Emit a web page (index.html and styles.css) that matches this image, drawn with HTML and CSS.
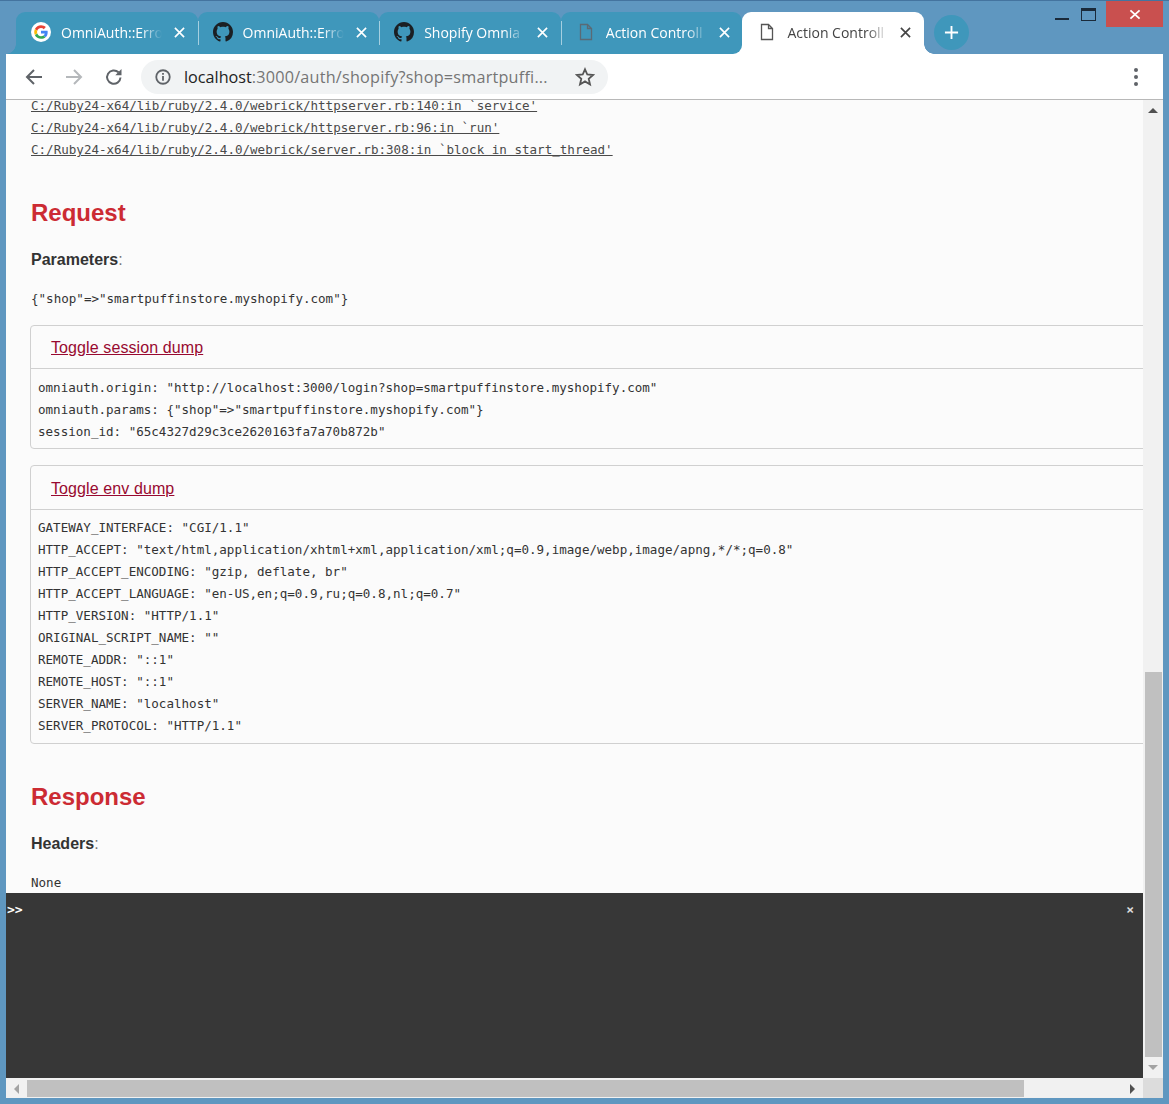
FILE: index.html
```html
<!DOCTYPE html>
<html lang="en">
<head>
    <meta charset="UTF-8">
    <title>Action Controller: Exception caught</title>
    <link rel="stylesheet" href="styles.css">
</head>
<body>

    <!-- Tab strip -->
    <div class="tabstrip">
        <div class="tabs">
            <div class="tab first">
                <svg class="favicon" viewBox="0 0 48 48">
                    <circle cx="24" cy="24" r="24" fill="#fff"/>
                    <path fill="#ea4335" d="M24 14.5c2.600 0 4.900.900 6.700 2.600l4.900-4.900C32.600 9.400 28.700 7.700 24 7.700c-6.400 0-11.900 3.700-14.600 9l5.700 4.400c1.300-4 5-6.600 8.900-6.600z"/>
                    <path fill="#4285f4" d="M40 24.400c0-1.200-.100-2.300-.300-3.300H24v6.300h9c-.400 2.100-1.600 3.800-3.300 5l5.500 4.300c3.200-3 4.800-7.300 4.800-12.300z"/>
                    <path fill="#fbbc05" d="M15.100 26.900c-.300-1-.500-2-.500-3s.200-2 .500-2.900l-5.700-4.400C8.300 18.800 7.700 21.300 7.700 24s.600 5.200 1.700 7.400l5.700-4.500z"/>
                    <path fill="#34a853" d="M24 40.300c4.400 0 8.100-1.500 10.800-3.900l-5.100-4c-1.500 1-3.400 1.600-5.700 1.600-4 0-7.600-2.700-8.900-6.500l-5.700 4.400c2.700 5.300 8.200 8.400 14.600 8.400z"/>
                </svg>
                <span class="title">OmniAuth::Erro</span>
                <svg class="close" viewBox="0 0 12 12"><path d="M1 1l10 10M11 1L1 11"/></svg>
            </div>
            <div class="tab sep">
                <svg class="favicon" viewBox="0 0 16 16"><path class="octo" d="M8 0C3.580 0 0 3.580 0 8c0 3.540 2.290 6.530 5.470 7.590.4.070.55-.17.55-.38 0-.19-.01-.82-.01-1.490-2.010.37-2.530-.49-2.690-.94-.09-.23-.48-.94-.82-1.130-.28-.15-.68-.52-.01-.53.63-.01 1.080.58 1.230.82.72 1.210 1.870.87 2.330.66.070-.52.280-.87.510-1.070-1.780-.2-3.640-.89-3.640-3.950 0-.87.310-1.590.820-2.150-.08-.2-.36-1.020.08-2.120 0 0 .67-.21 2.200.82.640-.18 1.320-.27 2-.27s1.360.09 2 .27c1.530-1.040 2.200-.82 2.200-.82.440 1.100.160 1.920.080 2.120.510.560.820 1.270.820 2.150 0 3.070-1.870 3.750-3.650 3.950.290.250.540.730.540 1.480 0 1.070-.010 1.930-.010 2.200 0 .210.150.460.550.380A8.010 8.010 0 0016 8c0-4.420-3.580-8-8-8z"/></svg>
                <span class="title">OmniAuth::Erro</span>
                <svg class="close" viewBox="0 0 12 12"><path d="M1 1l10 10M11 1L1 11"/></svg>
            </div>
            <div class="tab sep">
                <svg class="favicon" viewBox="0 0 16 16"><path class="octo" d="M8 0C3.580 0 0 3.580 0 8c0 3.540 2.290 6.530 5.470 7.590.4.070.55-.17.55-.38 0-.19-.01-.82-.01-1.490-2.010.37-2.530-.49-2.690-.94-.09-.23-.48-.94-.82-1.130-.28-.15-.68-.52-.01-.53.63-.01 1.080.58 1.230.82.72 1.210 1.870.87 2.330.66.070-.52.280-.87.510-1.070-1.780-.2-3.640-.89-3.640-3.950 0-.87.310-1.590.820-2.150-.08-.2-.36-1.020.08-2.120 0 0 .67-.21 2.200.82.640-.18 1.320-.27 2-.27s1.360.09 2 .27c1.530-1.040 2.200-.82 2.200-.82.440 1.100.160 1.920.080 2.120.510.560.820 1.270.820 2.150 0 3.070-1.870 3.750-3.650 3.950.290.250.540.730.540 1.480 0 1.070-.010 1.930-.010 2.200 0 .210.150.460.550.380A8.010 8.010 0 0016 8c0-4.420-3.580-8-8-8z"/></svg>
                <span class="title">Shopify Omnia</span>
                <svg class="close" viewBox="0 0 12 12"><path d="M1 1l10 10M11 1L1 11"/></svg>
            </div>
            <div class="tab sep before-active">
                <svg class="favicon doc" viewBox="0 0 20 20"><path d="M4.500 2.500h7l4 4v11h-11zM11.500 2.500v4h4"/></svg>
                <span class="title">Action Controll</span>
                <svg class="close" viewBox="0 0 12 12"><path d="M1 1l10 10M11 1L1 11"/></svg>
            </div>
            <div class="tab active">
                <svg class="favicon doc" viewBox="0 0 20 20"><path d="M4.500 2.500h7l4 4v11h-11zM11.500 2.500v4h4"/></svg>
                <span class="title">Action Controll</span>
                <svg class="close" viewBox="0 0 12 12"><path d="M1 1l10 10M11 1L1 11"/></svg>
            </div>
        </div>
        <div class="new-tab">
            <svg viewBox="0 0 16 16"><path d="M8 1v14M1 8h14"/></svg>
        </div>
        <div class="window-controls">
            <span class="win-min"></span>
            <span class="win-max"></span>
            <span class="win-close">
                <svg viewBox="0 0 12 12"><path d="M1 1.500l10 9M11 1.500l-10 9"/></svg>
            </span>
        </div>
    </div>

    <!-- Toolbar -->
    <div class="toolbar">
        <svg class="tool back" viewBox="0 0 20 20"><path d="M18 10H3M10 3l-7 7 7 7"/></svg>
        <svg class="tool forward" viewBox="0 0 20 20"><path d="M2 10h15M10 3l7 7-7 7"/></svg>
        <svg class="tool reload" viewBox="0 0 20 20">
            <path d="M16.500 10.500a6.700 6.700 0 1 1-2-5.200"/>
            <path class="solid" d="M17.500 2v6.200h-6.200z"/>
        </svg>
        <div class="omnibox">
            <svg class="info" viewBox="0 0 20 20">
                <circle cx="10" cy="10" r="7.500"/>
                <path d="M10 9v5.200M10 5.600v1.800"/>
            </svg>
            <span class="url">localhost<span class="url-rest">:3000/auth/shopify?shop=smartpuffi...</span></span>
            <svg class="star" viewBox="0 0 20 20"><path d="M10 2.300l2.300 5.200 5.700.5-4.300 3.800 1.300 5.600-5-3-5 3 1.300-5.600L2 8l5.700-.5z"/></svg>
        </div>
        <div class="menu"><span></span><span></span><span></span></div>
    </div>

    <!-- Browser viewport -->
    <div class="viewport">
        <div class="content">
            <div class="page">
                <div class="trace">
                    <div><a href="#">C:/Ruby24-x64/lib/ruby/2.4.0/webrick/httpserver.rb:140:in `service'</a></div>
                    <div><a href="#">C:/Ruby24-x64/lib/ruby/2.4.0/webrick/httpserver.rb:96:in `run'</a></div>
                    <div><a href="#">C:/Ruby24-x64/lib/ruby/2.4.0/webrick/server.rb:308:in `block in start_thread'</a></div>
                </div>

                <h2>Request</h2>
                <p class="label"><b>Parameters</b>:</p>
                <pre class="dump">{"shop"=&gt;"smartpuffinstore.myshopify.com"}</pre>

                <div class="details session">
                    <div class="details-head"><a href="#">Toggle session dump</a></div>
                    <pre class="details-body">omniauth.origin: "http://localhost:3000/login?shop=smartpuffinstore.myshopify.com"
omniauth.params: {"shop"=&gt;"smartpuffinstore.myshopify.com"}
session_id: "65c4327d29c3ce2620163fa7a70b872b"</pre>
                </div>

                <div class="details env">
                    <div class="details-head"><a href="#">Toggle env dump</a></div>
                    <pre class="details-body">GATEWAY_INTERFACE: "CGI/1.1"
HTTP_ACCEPT: "text/html,application/xhtml+xml,application/xml;q=0.9,image/webp,image/apng,*/*;q=0.8"
HTTP_ACCEPT_ENCODING: "gzip, deflate, br"
HTTP_ACCEPT_LANGUAGE: "en-US,en;q=0.9,ru;q=0.8,nl;q=0.7"
HTTP_VERSION: "HTTP/1.1"
ORIGINAL_SCRIPT_NAME: ""
REMOTE_ADDR: "::1"
REMOTE_HOST: "::1"
SERVER_NAME: "localhost"
SERVER_PROTOCOL: "HTTP/1.1"</pre>
                </div>

                <h2>Response</h2>
                <p class="label"><b>Headers</b>:</p>
                <pre class="dump none">None</pre>
            </div>

            <!-- Web console -->
            <div class="console">
                <span class="prompt">&gt;&gt;</span>
                <span class="console-close">×</span>
            </div>
        </div>

        <div class="vscroll">
            <div class="arrow-box"><i class="arrow up"></i></div>
            <div class="vthumb"></div>
            <div class="arrow-box"><i class="arrow down"></i></div>
        </div>
        <div class="hscroll">
            <div class="arrow-box side"><i class="arrow left"></i></div>
            <div class="hthumb"></div>
            <div class="arrow-box side"><i class="arrow right"></i></div>
        </div>
        <div class="corner"></div>
    </div>

</body>
</html>
```

FILE: styles.css
```css
/* General */
html, body {
    height: 100%;
}
body {
    margin: 0;
    padding: 0 6px 6px;
    box-sizing: border-box;
    display: flex;
    flex-direction: column;
    overflow: hidden;
    background-color: #5f97c0;
    border-top: 1px solid #44749f;
    font-family: "Liberation Sans", Arial, sans-serif;
    color: #333;
}

/* Tab strip */
.tabstrip {
    display: flex;
    height: 53px;
    padding: 11px 0 0 10px;
    box-sizing: border-box;
    position: relative;
    flex: none;
}
.tabs {
    display: flex;
}
.tab {
    width: 181.6px;
    height: 42px;
    box-sizing: border-box;
    padding: 0 12.7px 2px 15px;
    display: flex;
    align-items: center;
    gap: 10px;
    background-color: #3f97bb;
    border-radius: 9px 9px 0 0;
    color: #fff;
    font-family: "Open Sans", sans-serif;
    font-size: 14px;
    position: relative;
}
.tab.sep::before {
    content: "";
    position: absolute;
    left: 0;
    top: 9px;
    height: 24px;
    width: 1px;
    background-color: #a5cfe0;
}
.tab.first::before {
    content: "";
    position: absolute;
    left: -10px;
    bottom: 0;
    width: 10px;
    height: 10px;
    background: radial-gradient(circle at 0 0, transparent 9.5px, #3f97bb 10px);
}
.tab.before-active {
    border-bottom-right-radius: 9px;
}
.tab.active {
    background-color: #fff;
    color: #444;
}
.tab.active::before,
.tab.active::after {
    content: "";
    position: absolute;
    bottom: 0;
    width: 10px;
    height: 10px;
}
.tab.active::before {
    left: -10px;
    z-index: -1;
    background-color: #fff;
}
.tab.active::after {
    right: -10px;
    background: radial-gradient(circle at 100% 0, transparent 9.5px, #fff 10px);
}
.favicon {
    width: 20px;
    height: 20px;
    flex: none;
}
.octo {
    fill: #1b1f23;
}
.doc {
    fill: none;
    stroke: #5a6a75;
    stroke-width: 1.3;
}
.active .doc {
    stroke: #555;
}
.title {
    flex: 1;
    min-width: 0;
    white-space: nowrap;
    -webkit-mask-image: linear-gradient(to right, #000 78%, transparent 98%);
    mask-image: linear-gradient(to right, #000 78%, transparent 98%);
}
.close {
    width: 11px;
    height: 11px;
    flex: none;
    fill: none;
    stroke: #fff;
    stroke-width: 1.8;
}
.active .close {
    stroke: #444;
}
.new-tab {
    width: 35px;
    height: 35px;
    margin: 3px 0 0 10px;
    border-radius: 50%;
    background-color: #3f97bb;
    display: flex;
    align-items: center;
    justify-content: center;
}
.new-tab svg {
    width: 15px;
    height: 15px;
    fill: none;
    stroke: #fff;
    stroke-width: 2;
}

/* Window buttons */
.window-controls {
    position: absolute;
    top: 0;
    right: 0;
    height: 26px;
    display: flex;
}
.win-min {
    width: 14px;
    height: 2px;
    margin: 17px 12px 0 0;
    background-color: #1a2a3a;
}
.win-max {
    width: 13px;
    height: 9px;
    margin: 7px 10px 0 0;
    border: 1px solid #1a2a3a;
    border-top-width: 3px;
}
.win-close {
    width: 57px;
    height: 26px;
    background-color: #c9504f;
    display: flex;
    align-items: center;
    justify-content: center;
}
.win-close svg {
    width: 12px;
    height: 11px;
    fill: none;
    stroke: #fff;
    stroke-width: 2;
}

/* Toolbar */
.toolbar {
    display: flex;
    align-items: center;
    height: 46px;
    flex: none;
    box-sizing: border-box;
    background-color: #fff;
    border-bottom: 1px solid #b8b8b8;
    padding-left: 18px;
}
.tool {
    width: 20px;
    height: 20px;
    flex: none;
    margin-right: 20px;
    fill: none;
    stroke: #5f6368;
    stroke-width: 2;
}
.tool.reload {
    margin-right: 17px;
}
.tool.forward {
    stroke: #b5b8bb;
}
.tool .solid {
    fill: #5f6368;
    stroke: none;
}
.omnibox {
    width: 467px;
    height: 34px;
    flex: none;
    display: flex;
    align-items: center;
    background-color: #f1f3f4;
    border-radius: 17px;
    box-sizing: border-box;
    padding: 0 13px;
}
.info {
    width: 18px;
    height: 18px;
    flex: none;
    fill: none;
    stroke: #5f6368;
    stroke-width: 2;
}
.url {
    flex: 1;
    margin-left: 12px;
    font-family: "Open Sans", sans-serif;
    font-size: 16.2px;
    color: #222;
    white-space: nowrap;
}
.url-rest {
    color: #757575;
    letter-spacing: 0.22px;
}
.star {
    width: 20px;
    height: 20px;
    flex: none;
    fill: none;
    stroke: #555;
    stroke-width: 1.8;
}
.menu {
    margin-left: auto;
    margin-right: 25px;
    display: flex;
    flex-direction: column;
    gap: 3px;
}
.menu span {
    width: 4px;
    height: 4px;
    border-radius: 50%;
    background-color: #5f6368;
}

/* Viewport */
.viewport {
    flex: 1;
    min-height: 0;
    display: grid;
    grid-template-columns: 1fr 20px;
    grid-template-rows: 1fr 20px;
}
.content {
    min-width: 0;
    min-height: 0;
    display: flex;
    flex-direction: column;
    overflow: hidden;
}

/* Error page */
.page {
    flex: 1;
    min-height: 0;
    overflow: hidden;
    background-color: #fbfbfb;
    padding-left: 24px;
    font-size: 13px;
}
pre, .trace {
    font-family: "DejaVu Sans Mono", "Liberation Mono", monospace;
    font-size: 12.55px;
    line-height: 22px;
    margin: 0;
}
pre {
    white-space: pre;
}
.trace {
    margin-top: -5px;
    padding-left: 1px;
}
.trace a {
    color: #4a4a4a;
}
h2 {
    margin: 38px 0 0 1px;
    font-size: 24px;
    line-height: 28px;
    font-weight: bold;
    color: #cc2b33;
}
.env + h2 {
    margin-top: 39px;
}
.label {
    margin: 22px 0 0 1px;
    font-size: 16px;
    line-height: 22px;
    color: #777;
}
.label b {
    color: #333;
}
.dump {
    margin: 17px 0 0 1px;
}
.none {
    margin-top: 17px;
}
.details {
    margin: 16px -10px 0 0;
    border: 1px solid #d0d0d0;
    border-radius: 4px;
}
.details.session {
    margin-top: 15px;
}
.details-head {
    height: 42px;
    line-height: 44px;
    padding-left: 20px;
    border-bottom: 1px solid #d0d0d0;
    font-size: 16px;
    letter-spacing: 0.1px;
}
.env .details-head {
    height: 43px;
    line-height: 45px;
}
.details-head a {
    color: #980930;
}
.details-body {
    padding: 7px 7px 6px;
}
.session .details-body {
    padding: 8px 7px 5px;
}

/* Web console */
.console {
    height: 185px;
    flex: none;
    background-color: #373737;
    color: #fff;
    display: flex;
    justify-content: space-between;
    padding: 6px 9px 0 1px;
    box-sizing: border-box;
    font-family: "DejaVu Sans Mono", monospace;
    font-size: 13px;
    font-weight: bold;
    line-height: 22px;
}
.console-close {
    color: #ddd;
}

/* Scrollbars */
.vscroll {
    background-color: #f1f1f1;
    display: flex;
    flex-direction: column;
    min-height: 0;
}
.vthumb {
    height: 385px;
    margin: auto 1px 0 2px;
    background-color: #c0c0c0;
}
.hscroll {
    background-color: #f1f1f1;
    display: flex;
    padding: 2px 0 1px;
}
.hthumb {
    width: 997px;
    background-color: #c0c0c0;
}
.corner {
    background-color: #dcdcdc;
}
.arrow-box {
    height: 21px;
    display: flex;
    align-items: center;
    justify-content: center;
    flex: none;
}
.arrow-box.side {
    width: 21px;
    height: auto;
}
.arrow-box.side:last-child {
    margin-left: auto;
}
.arrow {
    width: 0;
    height: 0;
    border: 5px solid transparent;
}
.arrow.up {
    border-top: 0;
    border-bottom-color: #505050;
}
.arrow.down {
    border-bottom: 0;
    border-top-color: #a3a3a3;
}
.arrow.left {
    border-left: 0;
    border-right-color: #a3a3a3;
}
.arrow.right {
    border-right: 0;
    border-left-color: #505050;
}
```
